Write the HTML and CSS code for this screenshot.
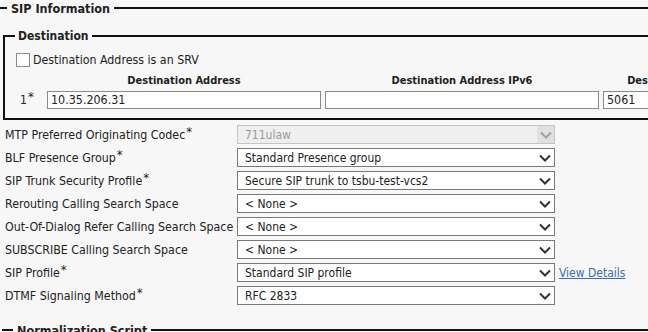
FILE: index.html
```html
<!DOCTYPE html>
<html>
<head>
<meta charset="utf-8">
<link rel="stylesheet" href="styles.css">
</head>
<body>
<div class="section-head">
  <span class="lead"></span><span class="title">SIP Information</span><span class="rule"></span>
</div>
<fieldset class="dest">
  <legend>Destination</legend>
  <div class="srv"><span class="cb"></span><span>Destination Address is an SRV</span></div>
  <div class="dest-grid">
    <div></div>
    <div class="th">Destination Address</div>
    <div class="th">Destination Address IPv6</div>
    <div class="th">Destination Port</div>
    <div class="num">1<span class="req">*</span></div>
    <div class="input">10.35.206.31</div>
    <div class="input"></div>
    <div class="input">5061</div>
  </div>
</fieldset>
<div class="form">
  <div class="row">
    <div class="label">MTP Preferred Originating Codec<span class="req">*</span></div>
    <div class="select disabled"><span>711ulaw</span><span class="arrow"><svg width="12" height="8" viewBox="0 0 12 8"><path d="M1 1.5 L6 6.5 L11 1.5" fill="none" stroke="#a0a0a0" stroke-width="2"/></svg></span></div>
  </div>
  <div class="row">
    <div class="label">BLF Presence Group<span class="req">*</span></div>
    <div class="select"><span>Standard Presence group</span><span class="arrow"><svg width="12" height="8" viewBox="0 0 12 8"><path d="M1 1.5 L6 6.5 L11 1.5" fill="none" stroke="#333" stroke-width="2"/></svg></span></div>
  </div>
  <div class="row">
    <div class="label">SIP Trunk Security Profile<span class="req">*</span></div>
    <div class="select"><span>Secure SIP trunk to tsbu-test-vcs2</span><span class="arrow"><svg width="12" height="8" viewBox="0 0 12 8"><path d="M1 1.5 L6 6.5 L11 1.5" fill="none" stroke="#333" stroke-width="2"/></svg></span></div>
  </div>
  <div class="row">
    <div class="label">Rerouting Calling Search Space</div>
    <div class="select"><span>&lt; None &gt;</span><span class="arrow"><svg width="12" height="8" viewBox="0 0 12 8"><path d="M1 1.5 L6 6.5 L11 1.5" fill="none" stroke="#333" stroke-width="2"/></svg></span></div>
  </div>
  <div class="row">
    <div class="label">Out-Of-Dialog Refer Calling Search Space</div>
    <div class="select"><span>&lt; None &gt;</span><span class="arrow"><svg width="12" height="8" viewBox="0 0 12 8"><path d="M1 1.5 L6 6.5 L11 1.5" fill="none" stroke="#333" stroke-width="2"/></svg></span></div>
  </div>
  <div class="row">
    <div class="label">SUBSCRIBE Calling Search Space</div>
    <div class="select"><span>&lt; None &gt;</span><span class="arrow"><svg width="12" height="8" viewBox="0 0 12 8"><path d="M1 1.5 L6 6.5 L11 1.5" fill="none" stroke="#333" stroke-width="2"/></svg></span></div>
  </div>
  <div class="row">
    <div class="label">SIP Profile<span class="req">*</span></div>
    <div class="select"><span>Standard SIP profile</span><span class="arrow"><svg width="12" height="8" viewBox="0 0 12 8"><path d="M1 1.5 L6 6.5 L11 1.5" fill="none" stroke="#333" stroke-width="2"/></svg></span></div>
    <a class="link" href="#">View Details</a>
  </div>
  <div class="row">
    <div class="label">DTMF Signaling Method<span class="req">*</span></div>
    <div class="select"><span>RFC 2833</span><span class="arrow"><svg width="12" height="8" viewBox="0 0 12 8"><path d="M1 1.5 L6 6.5 L11 1.5" fill="none" stroke="#333" stroke-width="2"/></svg></span></div>
  </div>
</div>
<div class="section-head normal">
  <span class="lead"></span><span class="title">Normalization Script</span><span class="rule"></span>
</div>
</body>
</html>
```
FILE: styles.css
```css
html, body {
  margin: 0;
  padding: 0;
}
body {
  width: 648px;
  height: 332px;
  overflow: hidden;
  background: #f7f7f7;
  font-family: "DejaVu Sans Condensed", "DejaVu Sans", sans-serif;
  font-size: 11px;
  color: #222;
}
.section-head {
  display: flex;
  align-items: center;
  height: 16px;
  font-weight: bold;
  font-size: 12.5px;
}
.section-head .lead {
  width: 7px;
  border-top: 2px solid #111;
}
.section-head .title {
  padding: 0 4px;
}
.section-head .rule {
  flex: 1;
  border-top: 2px solid #111;
}
.section-head.normal {
  margin: 17px 0 0 2px;
}
.section-head.normal .lead {
  width: 11px;
}
.dest {
  margin: 12px -60px 0 3px;
  border: 2px solid #111;
  padding: 0 0 9px 0;
  min-width: 0;
}
.dest legend {
  margin-left: 10px;
  padding: 0 3px;
  font-weight: bold;
  font-size: 12px;
  line-height: 16px;
}
.srv {
  display: flex;
  align-items: center;
  height: 15px;
  margin: 8px 0 0 11px;
  font-size: 12.3px;
}
.cb {
  width: 12px;
  height: 12px;
  border: 1px solid #8a8a8a;
  background: #fff;
  margin-right: 3px;
}
.dest-grid {
  display: grid;
  grid-template-columns: 38px 274px 274px 140px;
  column-gap: 4px;
  row-gap: 3px;
  margin-top: 7px;
}
.th {
  font-weight: bold;
  text-align: center;
  white-space: nowrap;
  line-height: 14px;
}
.num {
  padding-left: 15px;
  display: flex;
  align-items: center;
  font-size: 12px;
}
.input {
  height: 16px;
  line-height: 16px;
  border: 1px solid #8a8a8a;
  background: #fff;
  padding-left: 3px;
  font-size: 12.4px;
}
.req {
  font-size: 13px;
  position: relative;
  top: -3px;
  margin-left: 1px;
  line-height: 0;
}
.form {
  margin-top: 5px;
}
.row {
  display: flex;
  align-items: center;
  height: 19px;
  margin-bottom: 4px;
}
.label {
  width: 237px;
  padding-left: 5px;
  box-sizing: border-box;
  white-space: nowrap;
  font-size: 12.3px;
}
.select {
  width: 318px;
  height: 19px;
  box-sizing: border-box;
  border: 1px solid #7a7a7a;
  background: #fff;
  display: flex;
  align-items: center;
  justify-content: space-between;
  padding-left: 7px;
  font-size: 12px;
}
.select .arrow {
  width: 17px;
  height: 100%;
  display: flex;
  align-items: center;
  justify-content: center;
  margin-right: 1px;
}
.select.disabled {
  background: #efefef;
  border-color: #c4c4c4;
  color: #9a9a9a;
}
.select.disabled .arrow {
  background: #e0e0e0;
  margin-right: 0;
}
.link {
  margin-left: 4px;
  color: #3a6cb4;
  text-decoration: underline;
  font-size: 12px;
}
```
